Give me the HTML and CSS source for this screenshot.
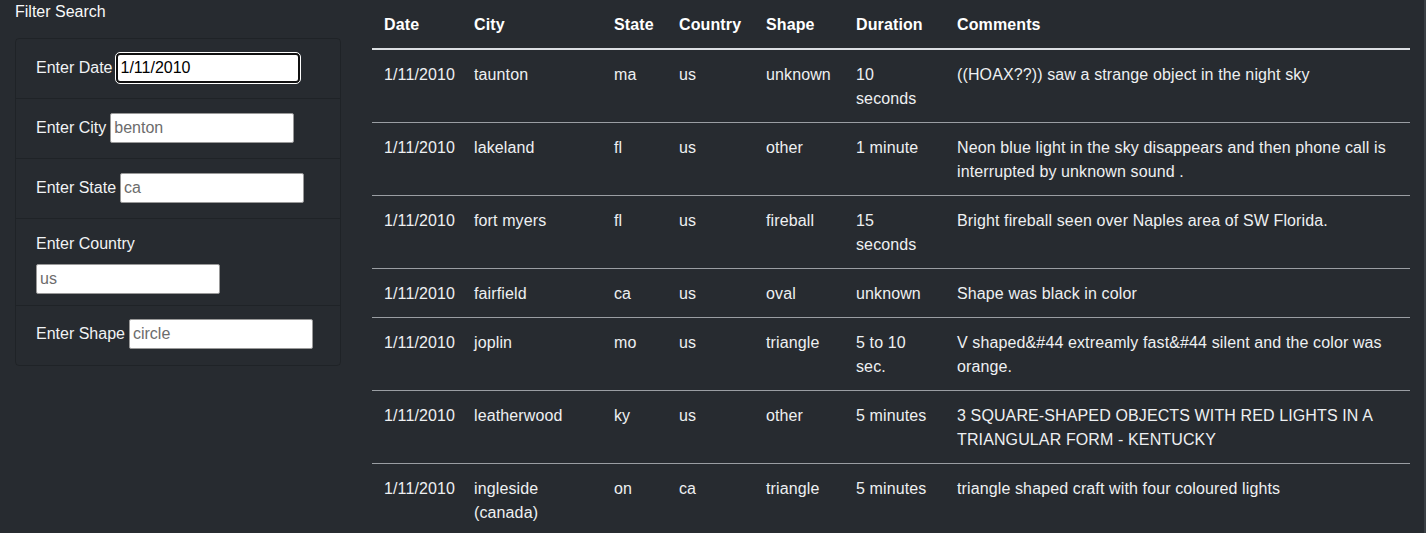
FILE: index.html
```html
<!DOCTYPE html>
<html lang="en">
<head>
  <meta charset="UTF-8" />
  <title>UFO Sightings</title>
  <link rel="stylesheet" href="styles.css">
</head>
<body>
  <div class="page">
    <aside class="sidebar">
      <div class="filter-title">Filter Search</div>
      <ul class="filters">
        <li class="filter-item">
          <label for="datetime">Enter Date</label>
          <input id="datetime" class="filter-input focused" type="text" value="1/11/2010">
        </li>
        <li class="filter-item">
          <label for="city">Enter City</label>
          <input id="city" class="filter-input" type="text" placeholder="benton">
        </li>
        <li class="filter-item">
          <label for="state">Enter State</label>
          <input id="state" class="filter-input" type="text" placeholder="ca">
        </li>
        <li class="filter-item stacked">
          <label for="country">Enter Country</label>
          <input id="country" class="filter-input" type="text" placeholder="us">
        </li>
        <li class="filter-item">
          <label for="shape">Enter Shape</label>
          <input id="shape" class="filter-input" type="text" placeholder="circle">
        </li>
      </ul>
    </aside>

    <main class="results">
      <table class="ufo-table">
        <colgroup>
          <col class="c-date">
          <col class="c-city">
          <col class="c-state">
          <col class="c-country">
          <col class="c-shape">
          <col class="c-duration">
          <col>
        </colgroup>
        <thead>
          <tr>
            <th>Date</th>
            <th>City</th>
            <th>State</th>
            <th>Country</th>
            <th>Shape</th>
            <th>Duration</th>
            <th>Comments</th>
          </tr>
        </thead>
        <tbody>
          <tr>
            <td>1/11/2010</td><td>taunton</td><td>ma</td><td>us</td><td>unknown</td><td>10 seconds</td>
            <td>((HOAX??)) saw a strange object in the night sky</td>
          </tr>
          <tr>
            <td>1/11/2010</td><td>lakeland</td><td>fl</td><td>us</td><td>other</td><td>1 minute</td>
            <td>Neon blue light in the sky disappears and then phone call is interrupted by unknown sound .</td>
          </tr>
          <tr>
            <td>1/11/2010</td><td>fort myers</td><td>fl</td><td>us</td><td>fireball</td><td>15 seconds</td>
            <td>Bright fireball seen over Naples area of SW Florida.</td>
          </tr>
          <tr>
            <td>1/11/2010</td><td>fairfield</td><td>ca</td><td>us</td><td>oval</td><td>unknown</td>
            <td>Shape was black in color</td>
          </tr>
          <tr>
            <td>1/11/2010</td><td>joplin</td><td>mo</td><td>us</td><td>triangle</td><td>5 to 10 sec.</td>
            <td>V shaped&amp;#44 extreamly fast&amp;#44 silent and the color was orange.</td>
          </tr>
          <tr>
            <td>1/11/2010</td><td>leatherwood</td><td>ky</td><td>us</td><td>other</td><td>5 minutes</td>
            <td>3 SQUARE-SHAPED OBJECTS WITH RED LIGHTS IN A TRIANGULAR FORM - KENTUCKY</td>
          </tr>
          <tr>
            <td>1/11/2010</td><td>ingleside (canada)</td><td>on</td><td>ca</td><td>triangle</td><td>5 minutes</td>
            <td>triangle shaped craft with four coloured lights</td>
          </tr>
        </tbody>
      </table>
    </main>
  </div>
</body>
</html>
```

FILE: styles.css
```css
html, body {
  height: 100%;
}

body {
  margin: 0;
  background-color: #272b30;
  color: #eef0f2;
  font-family: "Liberation Sans", Arial, sans-serif;
  font-size: 16px;
  line-height: 24px;
  overflow: hidden;
  border-right: 2px solid #3a3f44;
  box-sizing: border-box;
}

.page {
  display: flex;
  padding: 0 15px;
}

/* left column */
.sidebar {
  width: 326px;
  flex: none;
}

.filter-title {
  color: #f8f9fa;
  line-height: 24px;
  margin-bottom: 14px;
}

.filters {
  list-style: none;
  margin: 0;
  padding: 0;
  border: 1px solid rgba(0, 0, 0, 0.18);
  border-radius: 4px;
}

.filter-item {
  display: flex;
  align-items: center;
  gap: 4px;
  height: 60px;
  padding: 0 20px 2px;
  box-sizing: border-box;
  border-bottom: 1px solid rgba(0, 0, 0, 0.18);
  color: #f1f3f5;
}

.filter-item:last-child {
  border-bottom: none;
  height: 59px;
  padding-bottom: 3px;
}

.filter-item.stacked {
  flex-direction: column;
  align-items: flex-start;
  justify-content: flex-start;
  gap: 8px;
  height: 87px;
  padding-top: 13px;
  padding-bottom: 0;
}

.filter-input {
  width: 184px;
  height: 30px;
  box-sizing: border-box;
  margin: 0;
  padding: 0 3px;
  border: 1px solid #999;
  border-radius: 2px;
  background: #fff;
  font-family: inherit;
  font-size: 16px;
  color: #222;
}

.filter-input::placeholder {
  color: #6c6c6c;
  opacity: 1;
}

.filter-input.focused {
  border: 2px solid #111;
  border-radius: 4px;
  outline: 1px solid #fff;
  padding: 0 2px;
  color: #000;
}

/* right column */
.results {
  flex: 1;
  padding-left: 31px;
}

.ufo-table {
  width: 1038px;
  border-collapse: collapse;
  table-layout: fixed;
  letter-spacing: 0.12px;
}

.c-date { width: 90px; }
.c-city { width: 140px; }
.c-state { width: 65px; }
.c-country { width: 87px; }
.c-shape { width: 90px; }
.c-duration { width: 101px; }

.ufo-table th {
  text-align: left;
  font-weight: bold;
  color: #fff;
  padding: 13px 12px 11px;
  border-bottom: 2px solid #dcdfe2;
}

.ufo-table td {
  vertical-align: top;
  padding: 13px 12px 11px;
  border-bottom: 1px solid #9a9ea3;
}

.ufo-table tbody tr:last-child td {
  border-bottom: none;
}
```
